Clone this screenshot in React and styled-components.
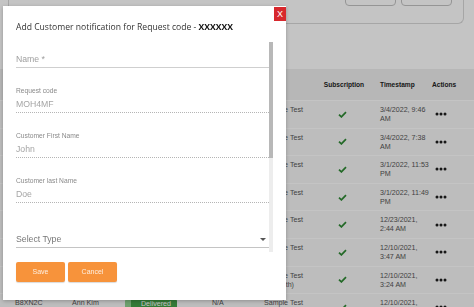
import styled, { createGlobalStyle } from "styled-components"

const rows = [
    { code: "MOH4MF", customer: "John Doe", type: "SMS", name: "Sample Test", time: "3/4/2022, 9:46 AM" },
    { code: "MOH4MF", customer: "John Doe", type: "SMS", name: "Sample Test", time: "3/4/2022, 7:38 AM" },
    { code: "K2PL9A", customer: "Jane Roe", type: "Email", name: "Sample Test", time: "3/1/2022, 11:53 PM" },
    { code: "K2PL9A", customer: "Jane Roe", type: "Email", name: "Sample Test", time: "3/1/2022, 11:49 PM" },
    { code: "T7QW3Z", customer: "Sam Lee", type: "SMS", name: "Sample Test", time: "12/23/2021, 2:44 AM" },
    { code: "B8XN2C", customer: "Ann Kim", type: "SMS", name: "Sample Test", time: "12/10/2021, 3:47 AM" },
    { code: "B8XN2C", customer: "Ann Kim", type: "SMS", name: "Sample Test (Re-auth)", time: "12/10/2021, 3:24 AM" },
    { code: "B8XN2C", customer: "Ann Kim", type: "N/A", name: "Sample Test", time: "12/10/2021, 3:20 AM" },
]

function Check() {
    return (
        <svg width="9" height="7" viewBox="0 0 9 7">
            <path d="M1 3.6 L3.4 5.9 L8 1.1" fill="none" stroke="#2f8a35" strokeWidth="1.7" />
        </svg>
    )
}

function Dots() {
    return (
        <svg width="12" height="4" viewBox="0 0 12 4">
            <circle cx="2" cy="2" r="1.5" fill="#1e1e1e" />
            <circle cx="6" cy="2" r="1.5" fill="#1e1e1e" />
            <circle cx="10" cy="2" r="1.5" fill="#1e1e1e" />
        </svg>
    )
}

function App() {
    return (
        <>
            <GlobalStyle />
            <Page>
                <TopCard>
                    <TopActions>
                        <GhostButton />
                        <GhostButton />
                    </TopActions>
                </TopCard>
                <Table>
                    <HeaderRow>
                        <Cell>Code</Cell>
                        <Cell>Customer</Cell>
                        <Cell>Status</Cell>
                        <Cell>Type</Cell>
                        <Cell>Name</Cell>
                        <Cell $center>Subscription</Cell>
                        <Cell>Timestamp</Cell>
                        <Cell $flush>Actions</Cell>
                    </HeaderRow>
                    {rows.map((row, i) => (
                        <BodyRow key={i}>
                            <Cell>{row.code}</Cell>
                            <Cell>{row.customer}</Cell>
                            <Cell><Badge>Delivered</Badge></Cell>
                            <Cell>{row.type}</Cell>
                            <Cell>{row.name}</Cell>
                            <IconCell $center><Check /></IconCell>
                            <Cell>{row.time}</Cell>
                            <IconCell><Dots /></IconCell>
                        </BodyRow>
                    ))}
                </Table>
            </Page>

            <Overlay />

            <Modal>
                <CloseButton>X</CloseButton>
                <Title>Add Customer notification for Request code - <b>XXXXXX</b></Title>
                <FormArea>
                    <FormFields>
                        <Input placeholder="Name *" />
                        <Field>
                            <Label>Request code</Label>
                            <Input $dotted readOnly value="MOH4MF" />
                        </Field>
                        <Field>
                            <Label>Customer First Name</Label>
                            <Input $dotted readOnly value="John" />
                        </Field>
                        <Field>
                            <Label>Customer last Name</Label>
                            <Input $dotted readOnly value="Doe" />
                        </Field>
                        <SelectBox>
                            <span>Select Type</span>
                            <Caret />
                        </SelectBox>
                        <Field>
                            <Label>Customer Email</Label>
                            <Input $dotted readOnly value="john.doe@example.com" />
                        </Field>
                    </FormFields>
                    <ScrollTrack>
                        <ScrollThumb />
                    </ScrollTrack>
                </FormArea>
                <ButtonRow>
                    <OrangeButton>Save</OrangeButton>
                    <OrangeButton>Cancel</OrangeButton>
                </ButtonRow>
            </Modal>
        </>
    )
}

const GlobalStyle = createGlobalStyle`
    html, body {
        margin: 0;
        padding: 0;
    }
    body {
        width: 474px;
        height: 307px;
        overflow: hidden;
        background: #ffffff;
        font-family: "Liberation Sans", Arial, sans-serif;
    }
`

const Page = styled.div`
    width: 474px;
`

const TopCard = styled.div`
    height: 24px;
    margin: 0 10px 0 8px;
    border: 1px solid #d8d8d8;
    border-top: none;
    border-radius: 0 0 6px 6px;
    box-sizing: border-box;
    overflow: hidden;
`

const TopActions = styled.div`
    display: flex;
    justify-content: flex-end;
    gap: 5px;
    padding-right: 11px;
    margin-top: -19px;
`

const GhostButton = styled.div`
    width: 49px;
    height: 23px;
    border: 1px solid #c2c2c2;
    border-radius: 4px;
    background: #ffffff;
`

const Table = styled.div`
    margin-top: 45px;
`

const HeaderRow = styled.div`
    display: grid;
    grid-template-columns: 57px 53px 87px 52px 48px 68px 56px 1fr;
    padding-left: 11px;
    height: 31px;
    align-items: center;
    background: #eeeeee;
    font-weight: bold;
    font-size: 6.6px;
    color: #222222;
`

const BodyRow = styled.div`
    display: grid;
    grid-template-columns: 57px 53px 87px 52px 48px 68px 56px 1fr;
    padding-left: 11px;
    height: 27.6px;
    box-sizing: border-box;
    border-top: 1.5px solid #ffffff;
    background: #f6f6f6;
    font-size: 7.1px;
    line-height: 9px;
    color: #555555;
`

const Cell = styled.div`
    padding: 5px 0 0 ${p => (p.$flush ? "0" : "4px")};
    text-align: ${p => (p.$center ? "center" : "left")};
    ${HeaderRow} & {
        padding-top: 0;
    }
`

const IconCell = styled.div`
    display: flex;
    align-items: center;
    justify-content: ${p => (p.$center ? "center" : "flex-start")};
    padding: 0 3px;
`

const Badge = styled.span`
    display: inline-block;
    padding: 1px 6px 1px 10px;
    border-left: 6px solid #8fd18f;
    background: #43a047;
    color: #ffffff;
    border-radius: 2px;
`

const Overlay = styled.div`
    position: fixed;
    inset: 0;
    background: rgba(0, 0, 0, 0.23);
`

const Modal = styled.div`
    position: fixed;
    left: 3px;
    top: 6px;
    width: 283px;
    height: 294px;
    box-sizing: border-box;
    padding: 15px 13px 0;
    background: #ffffff;
    box-shadow: 0 1px 4px rgba(0, 0, 0, 0.25);
    display: flex;
    flex-direction: column;
`

const CloseButton = styled.div`
    position: absolute;
    top: 1px;
    right: 0;
    width: 12px;
    height: 14px;
    background: #d7282d;
    color: #ffffff;
    font-size: 9px;
    line-height: 14px;
    text-align: center;
`

const Title = styled.div`
    font-family: "Open Sans", sans-serif;
    font-size: 8.6px;
    line-height: 12px;
    color: #333333;
    margin-bottom: 9px;
    white-space: nowrap;

    b {
        color: #111111;
        font-weight: 700;
    }
`

const FormArea = styled.div`
    display: flex;
    height: 210px;
`

const FormFields = styled.div`
    flex: 1;
    overflow: hidden;
    padding-top: 9px;
`

const ScrollTrack = styled.div`
    width: 4px;
    background: #ededed;
`

const ScrollThumb = styled.div`
    height: 116px;
    background: #b8b8b8;
`

const Field = styled.div`
    margin-top: 18px;
`

const Label = styled.div`
    font-size: 6.7px;
    line-height: 10px;
    color: #8a8a8a;
`

const Input = styled.input`
    display: block;
    width: 100%;
    height: 16px;
    box-sizing: content-box;
    padding: 0;
    margin: 0;
    border: none;
    border-bottom: 1px ${p => (p.$dotted ? "dotted #b5b5b5" : "solid #cfcfcf")};
    background: transparent;
    outline: none;
    font-family: "Liberation Sans", Arial, sans-serif;
    font-size: 8.7px;
    color: #a5a5a5;

    &::placeholder {
        color: #9e9e9e;
    }
`

const SelectBox = styled.div`
    display: flex;
    align-items: center;
    justify-content: space-between;
    margin-top: 28px;
    height: 16px;
    padding-right: 3px;
    border-bottom: 1px solid #c4c4c4;
    font-size: 8.7px;
    color: #777777;
`

const Caret = styled.span`
    width: 0;
    height: 0;
    border-left: 3px solid transparent;
    border-right: 3px solid transparent;
    border-top: 3px solid #555555;
`

const ButtonRow = styled.div`
    display: flex;
    gap: 3px;
    margin-top: 10px;
`

const OrangeButton = styled.div`
    width: 49px;
    height: 20px;
    border-radius: 2px;
    background: #f7933b;
    box-shadow: 0 1px 1px rgba(0, 0, 0, 0.15);
    color: #fdeee0;
    font-size: 7px;
    line-height: 20px;
    text-align: center;
`

export default App
